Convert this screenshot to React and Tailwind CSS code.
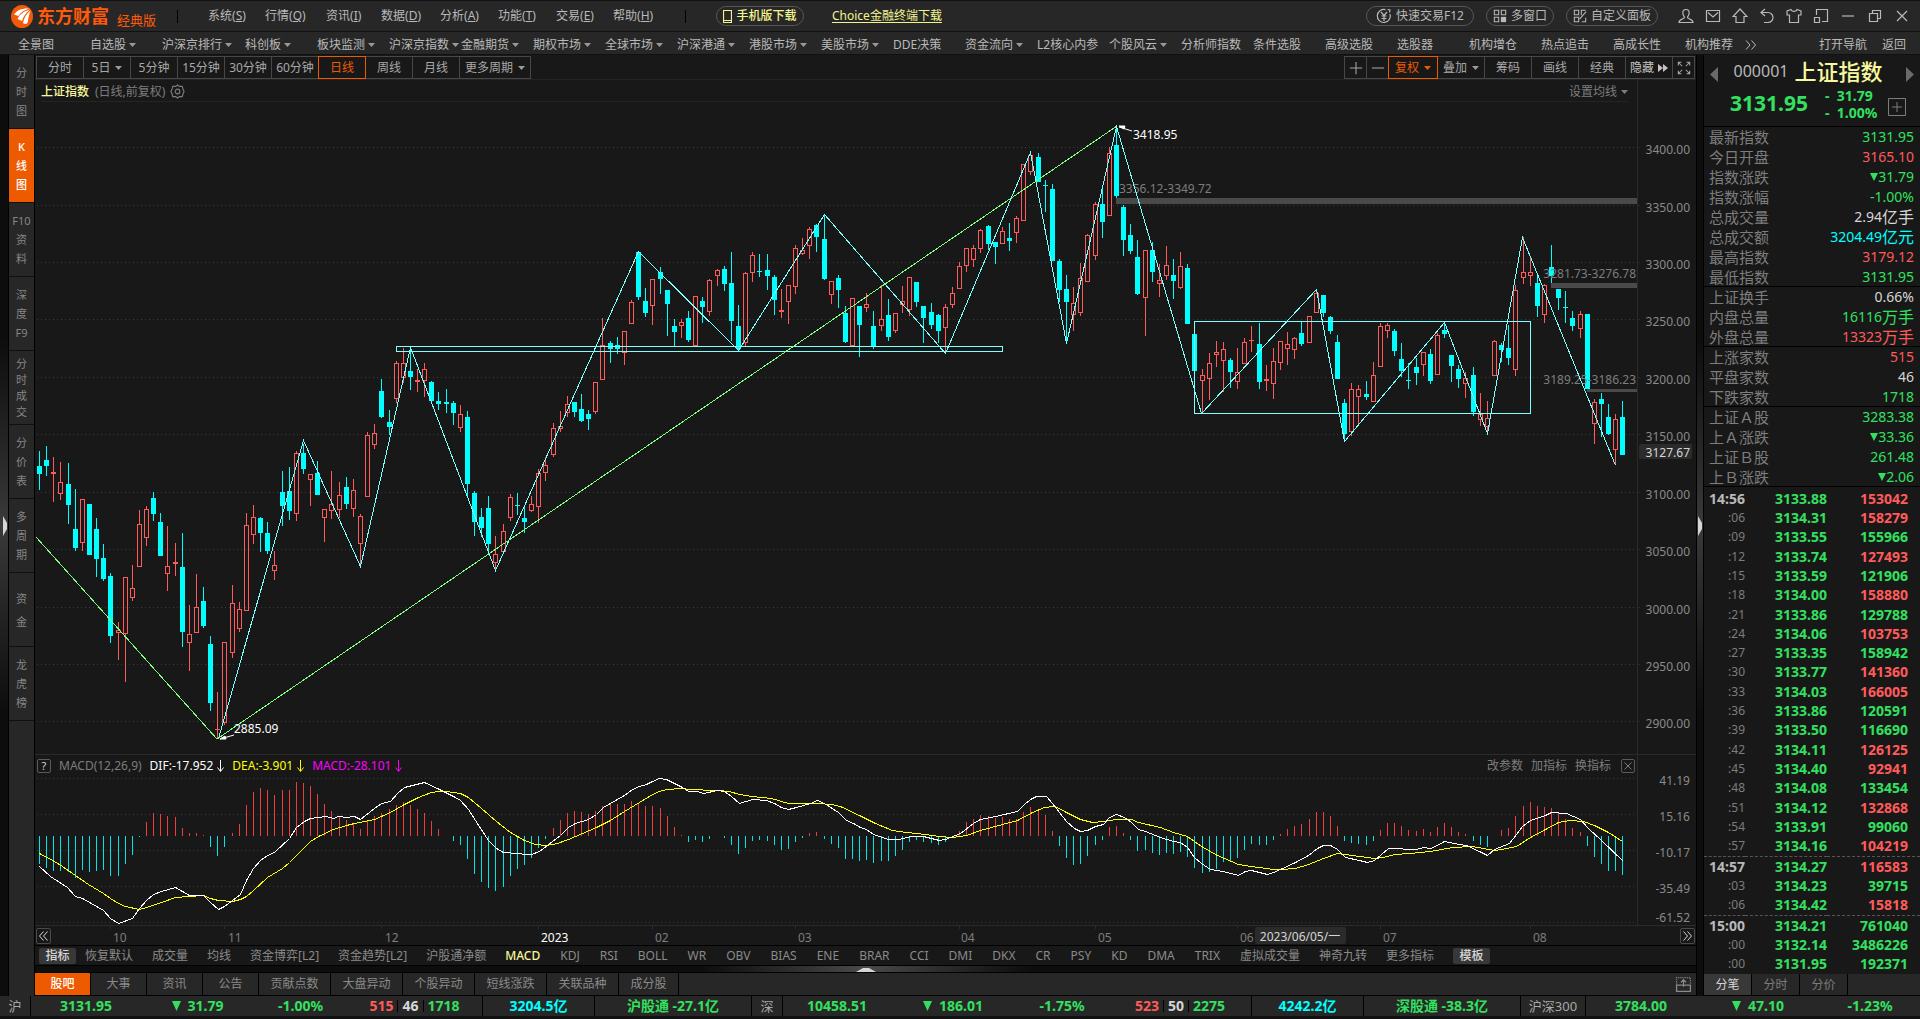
import { Fragment } from 'react'
import clsx from 'clsx'

const MENUS = [
  ['系统', 'S', 'w-[57px]'],
  ['行情', 'Q', 'w-[61px]'],
  ['资讯', 'I', 'w-[55px]'],
  ['数据', 'D', 'w-[59px]'],
  ['分析', 'A', 'w-[58px]'],
  ['功能', 'T', 'w-[58px]'],
  ['交易', 'E', 'w-[57px]'],
  ['帮助', 'H', 'w-[57px]'],
]

const NAV = [
  ['全景图'],
  ['自选股', true],
  ['沪深京排行', true],
  ['科创板', true],
  ['板块监测', true],
  ['沪深京指数', true],
  ['金融期货', true],
  ['期权市场', true],
  ['全球市场', true],
  ['沪深港通', true],
  ['港股市场', true],
  ['美股市场', true],
  ['DDE决策'],
  ['资金流向', true],
  ['L2核心内参'],
  ['个股风云', true],
  ['分析师指数'],
  ['条件选股'],
  ['高级选股'],
  ['选股器'],
  ['机构增仓'],
  ['热点追击'],
  ['高成长性'],
  ['机构推荐'],
]

const SIDE = [
  ['分', '时', '图'],
  ['K', '线', '图'],
  ['F10', '资', '料'],
  ['深', '度', 'F9'],
  ['分', '时', '成', '交'],
  ['分', '价', '表'],
  ['多', '周', '期'],
  ['资', '金'],
  ['龙', '虎', '榜'],
]

const PERIODS = ['分时', '5日', '5分钟', '15分钟', '30分钟', '60分钟', '日线', '周线', '月线', '更多周期']

const INDICATORS = [
  '恢复默认', '成交量', '均线', '资金博弈[L2]', '资金趋势[L2]', '沪股通净额', 'MACD', 'KDJ', 'RSI', 'BOLL', 'WR',
  'OBV', 'BIAS', 'ENE', 'BRAR', 'CCI', 'DMI', 'DKX', 'CR', 'PSY', 'KD', 'DMA', 'TRIX', '虚拟成交量', '神奇九转', '更多指标',
]

const NEWS_TABS = ['股吧', '大事', '资讯', '公告', '贡献点数', '大盘异动', '个股异动', '短线涨跌', '关联品种', '成分股']

// label, value, tone, unit, down arrow
const QUOTE_GROUPS = [
  [
    ['最新指数', '3131.95', 'green'],
    ['今日开盘', '3165.10', 'red'],
    ['指数涨跌', '31.79', 'green', '', true],
    ['指数涨幅', '-1.00%', 'green'],
    ['总成交量', '2.94', 'white', '亿手'],
    ['总成交额', '3204.49', 'cyan', '亿元'],
    ['最高指数', '3179.12', 'red'],
    ['最低指数', '3131.95', 'green'],
  ],
  [
    ['上证换手', '0.66%', 'white'],
    ['内盘总量', '16116', 'green', '万手'],
    ['外盘总量', '13323', 'red', '万手'],
  ],
  [
    ['上涨家数', '515', 'red'],
    ['平盘家数', '46', 'white'],
    ['下跌家数', '1718', 'green'],
  ],
  [
    ['上证Ａ股', '3283.38', 'green'],
    ['上Ａ涨跌', '33.36', 'green', '', true],
    ['上证Ｂ股', '261.48', 'green'],
    ['上Ｂ涨跌', '2.06', 'green', '', true],
  ],
]

const TICKS = [
  ['14:56', '3133.88', '153042', 'red'],
  [':06', '3134.31', '158279', 'red'],
  [':09', '3133.55', '155966', 'green'],
  [':12', '3133.74', '127493', 'red'],
  [':15', '3133.59', '121906', 'green'],
  [':18', '3134.00', '158880', 'red'],
  [':21', '3133.86', '129788', 'green'],
  [':24', '3134.06', '103753', 'red'],
  [':27', '3133.35', '158942', 'green'],
  [':30', '3133.77', '141360', 'red'],
  [':33', '3134.03', '166005', 'red'],
  [':36', '3133.86', '120591', 'green'],
  [':39', '3133.50', '116690', 'green'],
  [':42', '3134.11', '126125', 'red'],
  [':45', '3134.40', '92941', 'red'],
  [':48', '3134.08', '133454', 'green'],
  [':51', '3134.12', '132868', 'red'],
  [':54', '3133.91', '99060', 'green'],
  [':57', '3134.16', '104219', 'red'],
  ['14:57', '3134.27', '116583', 'red'],
  [':03', '3134.23', '39715', 'green'],
  [':06', '3134.42', '15818', 'red'],
  ['15:00', '3134.21', '761040', 'green'],
  [':00', '3132.14', '3486226', 'green'],
  [':00', '3131.95', '192371', 'green'],
]

const TONES = {
  green: 'text-[#33e060]',
  red: 'text-[#ff5b5b]',
  white: 'text-[#d6d6d6]',
  cyan: 'text-[#00ffff]',
}

// direction (1 up, 0 down), high, body top, body bottom, low
const CANDLES = [
  [0, 451, 466, 474, 490], [0, 446, 460, 466, 476], [1, 457, 472, 474, 502], [1, 462, 482, 494, 500],
  [0, 463, 484, 505, 524], [0, 489, 529, 548, 551], [1, 499, 499, 543, 551], [0, 504, 504, 555, 555],
  [0, 518, 529, 559, 577], [0, 544, 558, 579, 581], [0, 573, 576, 636, 643], [1, 622, 630, 633, 660],
  [1, 577, 577, 634, 682], [1, 565, 588, 598, 601], [1, 510, 524, 567, 567], [1, 506, 509, 538, 546],
  [0, 492, 498, 514, 521], [0, 513, 522, 556, 556], [1, 526, 566, 574, 591], [1, 543, 562, 564, 576],
  [0, 533, 567, 632, 647], [1, 605, 634, 643, 671], [1, 574, 607, 633, 633], [0, 587, 601, 626, 628],
  [0, 636, 644, 703, 711], [1, 692, 729, 730, 738], [1, 642, 642, 723, 725], [1, 585, 603, 653, 658],
  [1, 602, 609, 629, 632], [1, 513, 525, 611, 611], [1, 505, 517, 535, 544], [0, 517, 518, 533, 552],
  [0, 522, 533, 551, 554], [1, 551, 565, 571, 580], [0, 471, 492, 506, 526], [0, 467, 491, 511, 520],
  [1, 451, 453, 514, 521], [0, 444, 453, 469, 474], [1, 474, 474, 480, 506], [0, 461, 473, 495, 495],
  [1, 509, 509, 518, 542], [1, 471, 504, 511, 519], [1, 482, 495, 510, 518], [0, 477, 487, 504, 509],
  [1, 479, 490, 509, 517], [1, 514, 516, 544, 566], [1, 432, 435, 497, 497], [1, 424, 433, 445, 449],
  [0, 379, 391, 417, 418], [0, 410, 422, 427, 435], [1, 361, 363, 399, 403], [1, 348, 363, 378, 383],
  [0, 347, 371, 377, 390], [1, 369, 380, 382, 392], [1, 363, 369, 381, 397], [0, 381, 382, 401, 401],
  [0, 392, 401, 404, 410], [0, 389, 402, 404, 413], [0, 401, 403, 413, 425], [1, 405, 414, 428, 432],
  [0, 411, 417, 484, 496], [0, 491, 493, 522, 536], [0, 508, 517, 528, 537], [0, 496, 508, 544, 554],
  [1, 536, 554, 563, 570], [1, 524, 531, 552, 552], [1, 494, 497, 518, 521], [0, 493, 505, 506, 515],
  [0, 507, 518, 522, 533], [1, 496, 504, 511, 512], [1, 469, 473, 507, 523], [1, 457, 465, 473, 481],
  [1, 423, 428, 455, 457], [1, 411, 426, 429, 432], [1, 396, 404, 413, 417], [0, 402, 402, 412, 417],
  [0, 394, 409, 421, 422], [0, 410, 414, 419, 430], [1, 382, 382, 412, 414], [1, 318, 345, 380, 380],
  [0, 341, 343, 349, 363], [0, 337, 345, 349, 354], [1, 331, 331, 353, 365], [1, 300, 302, 324, 324],
  [0, 251, 252, 297, 300], [0, 288, 301, 313, 317], [1, 279, 279, 306, 325], [0, 267, 272, 279, 294],
  [0, 290, 290, 304, 336], [0, 319, 326, 332, 347], [1, 319, 322, 326, 338], [0, 311, 318, 340, 342],
  [1, 296, 296, 346, 346], [0, 297, 301, 307, 323], [1, 279, 280, 312, 316], [1, 269, 270, 276, 286],
  [0, 266, 269, 284, 291], [0, 252, 283, 321, 341], [0, 305, 326, 349, 350], [1, 272, 273, 343, 346],
  [1, 252, 255, 273, 282], [0, 254, 271, 272, 277], [0, 254, 270, 276, 290], [0, 275, 277, 300, 315],
  [1, 289, 310, 312, 318], [1, 285, 285, 302, 324], [1, 245, 248, 287, 294], [1, 238, 250, 254, 255],
  [1, 227, 229, 246, 259], [0, 224, 225, 237, 252], [0, 214, 239, 279, 280], [1, 281, 281, 295, 304],
  [0, 275, 278, 290, 308], [0, 306, 313, 342, 343], [1, 298, 298, 346, 346], [0, 306, 306, 325, 357],
  [1, 293, 304, 308, 312], [0, 311, 326, 347, 349], [1, 285, 319, 326, 331], [0, 299, 315, 337, 341],
  [1, 313, 313, 331, 333], [1, 286, 301, 305, 313], [1, 277, 277, 310, 316], [0, 282, 282, 302, 307],
  [0, 306, 306, 318, 343], [0, 303, 312, 325, 329], [0, 314, 315, 331, 343], [1, 304, 307, 328, 353],
  [1, 287, 293, 305, 308], [1, 262, 266, 289, 289], [1, 248, 248, 266, 272], [1, 245, 248, 260, 267],
  [1, 229, 230, 249, 253], [0, 225, 226, 244, 250], [0, 242, 242, 247, 264], [1, 227, 231, 244, 244],
  [0, 223, 238, 241, 251], [1, 216, 218, 233, 243], [1, 164, 164, 221, 221], [1, 152, 155, 172, 175],
  [0, 153, 157, 182, 182], [0, 180, 185, 186, 212], [0, 184, 189, 261, 261], [0, 259, 261, 290, 302],
  [0, 275, 289, 302, 343], [1, 287, 303, 315, 331], [1, 263, 278, 313, 316], [1, 234, 235, 282, 282],
  [1, 202, 204, 256, 260], [0, 189, 204, 222, 238], [1, 147, 153, 216, 216], [0, 126, 145, 196, 198],
  [0, 205, 207, 240, 256], [0, 224, 235, 251, 254], [0, 240, 257, 294, 295], [1, 250, 250, 298, 336],
  [0, 242, 250, 272, 282], [1, 264, 280, 284, 297], [1, 246, 265, 276, 280], [0, 259, 275, 281, 299],
  [1, 252, 266, 288, 289], [0, 264, 268, 324, 324], [0, 334, 334, 371, 371], [1, 369, 375, 381, 412],
  [1, 353, 363, 379, 400], [1, 341, 352, 355, 367], [1, 342, 349, 361, 392], [0, 358, 360, 372, 388],
  [1, 348, 372, 382, 389], [1, 338, 342, 364, 364], [1, 326, 340, 341, 352], [0, 323, 344, 382, 389],
  [1, 365, 379, 381, 391], [1, 348, 361, 384, 399], [1, 341, 341, 363, 370], [1, 332, 344, 349, 365],
  [1, 337, 338, 350, 359], [0, 322, 333, 344, 346], [1, 316, 316, 343, 343], [1, 289, 293, 313, 313],
  [0, 295, 295, 313, 317], [0, 316, 317, 331, 334], [0, 335, 342, 379, 379], [0, 399, 403, 434, 440],
  [1, 383, 389, 432, 436], [1, 385, 389, 397, 426], [0, 381, 394, 397, 400], [1, 362, 375, 402, 402],
  [1, 323, 326, 367, 367], [1, 323, 325, 331, 338], [0, 329, 331, 351, 356], [0, 343, 359, 371, 377],
  [0, 363, 380, 381, 389], [0, 358, 367, 373, 385], [1, 352, 352, 365, 376], [0, 349, 354, 381, 384],
  [1, 333, 335, 375, 375], [0, 322, 330, 334, 338], [0, 355, 355, 366, 382], [0, 365, 369, 379, 388],
  [1, 372, 378, 384, 398], [0, 367, 375, 412, 416], [1, 393, 414, 420, 426], [1, 401, 418, 427, 433],
  [1, 340, 341, 376, 376], [0, 343, 345, 350, 362], [0, 325, 348, 358, 365], [1, 285, 290, 370, 376],
  [1, 237, 272, 278, 284], [1, 258, 272, 276, 286], [0, 276, 283, 306, 317], [1, 284, 285, 315, 323],
  [0, 245, 267, 276, 283], [0, 289, 289, 298, 310], [0, 291, 307, 308, 323], [0, 311, 318, 326, 331],
  [1, 311, 314, 329, 338], [0, 314, 314, 389, 389], [1, 399, 402, 424, 444], [0, 393, 399, 404, 437],
  [0, 404, 417, 434, 435], [1, 414, 419, 450, 465], [0, 401, 417, 455, 455],
]

const MACD_BARS = [
  -28, -32, -35, -35, -36, -42, -34, -36, -35, -34, -40, -40, -28, -19, -1, 14, 23, 22, 20, 19, 8, 3, 3, 1,
  -11, -20, -11, 3, 12, 31, 44, 48, 46, 41, 46, 46, 54, 53, 50, 42, 32, 25, 20, 16, 12, 7, 15, 20, 23, 27,
  31, 34, 31, 27, 23, 15, 7, 0, -5, -9, -23, -38, -46, -52, -55, -51, -40, -33, -29, -22, -12, -3, 8, 16,
  23, 25, 24, 22, 25, 30, 33, 32, 32, 35, 32, 30, 30, 28, 20, 9, 1, -6, -4, -6, -3, 0, -2, -9, -18, -12,
  -5, -4, -5, -9, -14, -13, -6, -2, 3, 4, -3, -8, -12, -23, -23, -25, -24, -27, -25, -25, -20, -14, -6, -4,
  -6, -7, -9, -6, -1, 5, 14, 17, 21, 20, 18, 19, 17, 17, 24, 29, 26, 21, 5, -10, -22, -29, -28, -20, -9,
  -4, 9, 10, 3, -4, -15, -14, -17, -19, -17, -18, -16, -21, -32, -37, -36, -33, -26, -25, -22, -14, -8, -9,
  -9, -4, 2, 7, 10, 12, 17, 24, 24, 20, 10, -5, -7, -8, -9, -5, 6, 13, 13, 10, 6, 5, 7, 4, 9, 13, 9, 4, 2,
  -5, -9, -11, 0, 6, 8, 20, 30, 34, 30, 29, 28, 23, 17, 8, 4, -10, -21, -28, -35, -35, -39,
]

const DIF =
  '39,866 50,876 67,887 75,896 82,898 103,910 110,918 118,923 132,918 139,908 146,900 153,894 161,891 175,887 189,895 203,895 210,902 218,909 224,906 232,900 240,894 246,880 253,868 260,860 267,855 274,852 289,838 296,827 304,821 310,818 318,817 326,816 333,818 338,816 346,817 354,816 360,819 374,808 381,803 390,801 397,793 404,787 412,785 424,782 439,789 453,796 460,800 468,809 475,820 488,840 496,848 503,852 517,853 525,854 531,854 539,851 560,835 568,827 575,823 588,819 596,814 603,807 610,803 624,795 632,789 639,786 646,784 652,781 659,778 666,779 674,783 682,787 688,791 697,791 703,793 717,790 724,791 731,796 739,803 752,799 766,800 774,803 781,807 788,809 796,807 803,805 810,803 817,800 824,803 838,812 846,820 853,823 860,827 866,829 873,834 888,839 899,839 910,836 923,836 939,840 945,839 960,833 973,823 980,819 995,816 1017,811 1024,804 1030,799 1036,796 1046,796 1052,803 1059,812 1066,821 1074,828 1080,831 1087,830 1095,826 1103,824 1109,817 1116,814 1124,817 1131,822 1138,829 1145,831 1160,837 1173,841 1180,842 1187,847 1194,857 1201,863 1210,869 1223,871 1238,875 1245,871 1251,870 1267,874 1273,872 1280,869 1295,862 1308,855 1317,848 1323,845 1330,845 1337,849 1345,857 1359,860 1367,862 1374,860 1381,854 1388,848 1416,849 1423,847 1430,848 1437,845 1444,841 1459,844 1466,845 1481,852 1487,855 1494,849 1509,843 1516,834 1522,826 1530,820 1545,815 1551,812 1566,813 1580,819 1588,828 1601,840 1623,861'

const DEA =
  '39,853 54,861 62,866 75,875 88,884 103,893 110,898 118,903 125,906 139,909 146,907 161,902 175,897 189,896 203,895 210,898 218,900 232,901 240,899 246,896 253,890 267,877 282,868 289,862 304,847 310,841 318,836 333,829 346,825 354,823 374,819 390,812 404,804 418,797 431,792 439,791 446,791 453,792 460,793 468,797 481,808 496,821 510,832 524,840 535,844 546,845 557,843 568,839 575,836 596,827 610,820 624,811 639,802 652,794 659,791 666,789 682,788 688,789 717,790 729,791 739,794 752,796 771,798 788,803 797,803 817,803 831,804 840,806 861,816 875,823 892,830 906,832 917,833 939,836 952,837 966,835 980,830 1002,824 1017,820 1032,812 1044,807 1054,806 1059,808 1066,812 1080,819 1092,822 1103,821 1116,819 1131,819 1138,822 1160,827 1173,832 1187,836 1201,846 1217,855 1238,864 1251,866 1273,869 1280,869 1295,868 1308,864 1323,858 1337,853 1352,855 1374,858 1383,857 1394,854 1409,853 1430,851 1452,847 1472,846 1494,850 1501,849 1516,846 1530,837 1545,829 1558,822 1569,820 1583,821 1594,825 1608,832 1622,841'

const ZIGZAG =
  '218,738 303,440 360,566 410,347 495,570 638,251 738,350 824,214 945,353 1030,152 1066,343 1116,126 1201,413 1316,289 1344,441 1444,322 1487,433 1522,237 1615,465'

const PRICE_GRID = [
  [147, '3400.00'], [205, '3350.00'], [262, '3300.00'], [319, '3250.00'], [377, '3200.00'], [434, '3150.00'],
  [492, '3100.00'], [549, '3050.00'], [607, '3000.00'], [664, '2950.00'], [721, '2900.00'],
]

const MACD_GRID = [
  [778, 785, '41.19'], [814, 821, '15.16'], [850, 857, '-10.17'], [886, 893, '-35.49'], [922, 922, '-61.52'],
]

const MONTHS = [
  [110, 113, '10'], [224, 228, '11'], [381, 385, '12'], [538, 541, '2023'], [652, 655, '02'], [795, 798, '03'],
  [959, 961, '04'], [1095, 1098, '05'], [1237, 1240, '06'], [1380, 1383, '07'], [1530, 1533, '08'],
]

const candleX = (i) => Math.round(39.05 + i * 7.132)

function Caret({ className = 'text-[#9a9a9a]' }) {
  return (
    <svg width="7" height="4" viewBox="0 0 7 4" className={clsx('shrink-0', className)} fill="currentColor">
      <path d="M0 0h7L3.5 4z" />
    </svg>
  )
}

function Glyph({ size = 16, children, className }) {
  return (
    <svg
      width={size}
      height={size}
      viewBox="0 0 16 16"
      className={clsx('shrink-0', className)}
      fill="none"
      stroke="currentColor"
      strokeWidth="1.2"
    >
      {children}
    </svg>
  )
}

function DownMark() {
  return (
    <svg width="9" height="10" viewBox="0 0 9 10" className="shrink-0" fill="currentColor">
      <path d="M0 0h9L4.5 10z" />
    </svg>
  )
}

function TitleBar() {
  return (
    <header className="flex h-8 items-center overflow-hidden border-t border-b border-[#111] bg-[#272727] text-xs whitespace-nowrap text-[#b9b9b9]">
      <svg width="22" height="23" viewBox="0 0 22 23" className="ml-[11px] shrink-0">
        <ellipse cx="11" cy="11.500" rx="11" ry="11.500" fill="#f25a07" />
        <path d="M3 9.500C6 5 11 3 18.500 3.500c-5 1.500-8.500 3.500-11 7.500z" fill="#fff" />
        <path d="M6.500 14C9 9 13 6 19 4.500c-4.500 3.500-6.500 7-8 11.500z" fill="#fff" />
        <path d="M12 18c1-5 3-9 7.500-12.500-1.500 4-2 7.500-3 12.500-1.500 1.500-3.500 1-4.500 0z" fill="#fff" />
      </svg>
      <span className="ml-1 text-lg leading-6 font-bold text-[#ff5a0a]">东方财富</span>
      <span className="mt-2 ml-2 w-[60px] shrink-0 text-[13px] leading-4 text-[#ff5a0a]">经典版</span>
      <span className="h-[13px] w-px bg-black" />
      <nav className="ml-[30px] flex">
        {MENUS.map(([label, key, width]) => (
          <button key={key} type="button" className={clsx('shrink-0 text-left', width)}>
            {label}(<u>{key}</u>)
          </button>
        ))}
      </nav>
      <span className="ml-[15px] h-[13px] w-px bg-black" />
      <button
        type="button"
        className="ml-[30px] flex h-5 w-[88px] shrink-0 items-center justify-center gap-1 rounded-full border border-[#555] font-medium text-[#f3f58e]"
      >
        <svg width="9" height="13" viewBox="0 0 9 13" fill="none" stroke="currentColor" className="shrink-0">
          <path d="M.5.5h8v12h-8zM1 10.500h7" strokeWidth="1.200" />
        </svg>
        手机版下载
      </button>
      <a href="#choice" className="ml-7 text-[#f3f58e] underline underline-offset-2">
        Choice金融终端下载
      </a>

      <div className="ml-auto flex shrink-0 items-center gap-3">
        <button type="button" className="flex h-5 w-[108px] items-center justify-center gap-1 rounded-full border border-[#555]">
          <Glyph>
            <path d="M9.500 1.700A6.500 6.500 0 1 0 14 6M5 4l3 3.500L11 4M8 7.500V13M5.500 8h5M5.500 10.500h5M11.500 1.500l2.500.5-.5 2.500" />
          </Glyph>
          快速交易F12
        </button>
        <button type="button" className="flex h-5 w-[68px] items-center justify-center gap-1 rounded-full border border-[#555]">
          <Glyph size={14}>
            <path d="M1.500 1.500h5v5h-5zM9.500 1.500h5v5h-5zM1.500 9.500h5v5h-5z" />
            <path d="M9 9h6v6H9z" fill="currentColor" stroke="none" />
          </Glyph>
          多窗口
        </button>
        <button type="button" className="flex h-5 w-[92px] items-center justify-center gap-1 rounded-full border border-[#555]">
          <Glyph size={14}>
            <path d="M1.500 1.500h5v5h-5zM9.500 7V1.500h5M1.500 9.500h5v5h-5zM14.500 10v4.500H10M7.500 11.500 15 3" />
          </Glyph>
          自定义面板
        </button>
      </div>
      <div className="mr-2.5 ml-5 flex shrink-0 items-center gap-[11px]">
        <button type="button" aria-label="用户">
          <Glyph>
            <path d="M8 1.500c2.200 0 3.200 1.500 3.200 3.300S10 8.500 9.500 9.200c0 2 5.500 1.800 5.500 5.300H1c0-3.500 5.500-3.300 5.500-5.300C6 8.500 4.800 6.600 4.800 4.800S5.800 1.500 8 1.500z" />
          </Glyph>
        </button>
        <button type="button" aria-label="邮件">
          <Glyph>
            <path d="M1.500 2.500h13v11h-13zM3 4.500l5 4.500 5-4.500" />
          </Glyph>
        </button>
        <button type="button" aria-label="主页">
          <Glyph>
            <path d="M8 1 1 8.500h3v6h8v-6h3z" />
          </Glyph>
        </button>
        <button type="button" aria-label="返回">
          <Glyph>
            <path d="M6 1 2 4.500 6 8M2 4.500h7a5 5 0 0 1 0 10H5" />
          </Glyph>
        </button>
        <button type="button" aria-label="换肤">
          <Glyph>
            <path d="M5 1.500 1 3v4h2.500v7.500h9V7H15V3l-4-1.500C10.500 4 5.500 4 5 1.500z" />
          </Glyph>
        </button>
        <button type="button" aria-label="停靠">
          <Glyph>
            <path d="M3.500 7V1.500h11v12H9M1.500 9.500h5v5h-5z" />
          </Glyph>
        </button>
        <button type="button" aria-label="最小化">
          <Glyph>
            <path d="M2 8h12" />
          </Glyph>
        </button>
        <button type="button" aria-label="还原">
          <Glyph>
            <path d="M2.500 5.500h8v8h-8zM5.500 5V2.500h8v8H11" />
          </Glyph>
        </button>
        <button type="button" aria-label="关闭">
          <Glyph>
            <path d="m3 3 10 10M13 3 3 13" />
          </Glyph>
        </button>
      </div>
    </header>
  )
}

function NavBar() {
  return (
    <nav className="flex h-[23px] items-center overflow-hidden border-b border-[#111] bg-[#272727] pt-[3px] pr-[14px] pl-[18px] text-xs whitespace-nowrap text-[#b9b9b9]">
      {NAV.map(([label, caret]) => (
        <button
          key={label}
          type="button"
          className={clsx('flex shrink-0 items-center gap-[3px]', label === '沪深京排行' ? 'w-[83px]' : 'w-[72px]')}
        >
          {label}
          {caret && <Caret />}
        </button>
      ))}
      <button type="button" aria-label="更多" className="-ml-3">
        <svg width="12" height="10" viewBox="0 0 12 10" fill="none" stroke="currentColor">
          <path d="m1 .5 4 4.500-4 4.500M6.500.5l4 4.500-4 4.500" />
        </svg>
      </button>
      <button type="button" className="ml-auto">打开导航</button>
      <button type="button" className="ml-[15px]">返回</button>
    </nav>
  )
}

function SideTabs() {
  return (
    <aside className="flex w-[26px] shrink-0 flex-col border-r border-black bg-[#272727]">
      {SIDE.map((chars, i) => (
        <button
          key={chars.join('')}
          type="button"
          className={clsx(
            'flex h-[74px] w-full flex-col items-center justify-center border-b border-[#101010] text-[11px]',
            i === 1 ? 'bg-[#ee5a00] font-medium text-white' : 'text-[#868686]',
            chars.length === 4 && 'leading-4',
            chars.length === 3 && 'leading-[19px]',
            chars.length === 2 && 'leading-[23px]',
          )}
        >
          {chars.map((c) => (
            <span key={c}>{c}</span>
          ))}
        </button>
      ))}
    </aside>
  )
}

function PeriodBar() {
  return (
    <div className="flex h-[25px] items-start border-b border-[#242424] pt-px pl-px text-xs whitespace-nowrap text-[#a8a8a8]">
      {PERIODS.map((p) => (
        <button
          key={p}
          type="button"
          className={clsx(
            'relative -mr-px flex h-[23px] shrink-0 items-center justify-center gap-[5px] border',
            p === '更多周期' ? 'w-[72px]' : 'w-12',
            p === '日线' ? 'z-10 border-[#ee5a00] text-[#ee5a00]' : 'border-[#474747]',
          )}
        >
          {p}
          {(p === '5日' || p === '更多周期') && <Caret />}
        </button>
      ))}
      <div className="mr-px ml-auto flex">
        <button type="button" aria-label="放大" className="-mr-px flex h-[23px] w-[23px] items-center justify-center border border-[#474747]">
          <Glyph size={14}>
            <path d="M8 1v14M1 8h14" />
          </Glyph>
        </button>
        <button type="button" aria-label="缩小" className="-mr-px flex h-[23px] w-[23px] items-center justify-center border border-[#474747]">
          <Glyph size={14}>
            <path d="M1 8h14" />
          </Glyph>
        </button>
        <button
          type="button"
          className="relative z-10 -mr-px flex h-[23px] w-[50px] items-center justify-center gap-[5px] border border-[#ee5a00] text-[#ee5a00]"
        >
          复权
          <Caret className="text-[#ee5a00]" />
        </button>
        <button type="button" className="-mr-px flex h-[23px] w-12 items-center justify-center gap-[5px] border border-[#474747]">
          叠加
          <Caret />
        </button>
        {['筹码', '画线', '经典'].map((t) => (
          <button key={t} type="button" className="-mr-px h-[23px] w-12 border border-[#474747]">
            {t}
          </button>
        ))}
        <button type="button" className="-mr-px flex h-[23px] w-12 items-center justify-center gap-1 border border-[#474747] text-[#c4c4c4]">
          隐藏
          <svg width="10" height="8" viewBox="0 0 10 8" fill="currentColor">
            <path d="m0 0 5 4-5 4zM5 0l5 4-5 4z" />
          </svg>
        </button>
        <button type="button" aria-label="全屏" className="flex h-[23px] w-[23px] items-center justify-center border border-[#474747]">
          <Glyph size={14}>
            <path d="M1.500 5V1.500H5M11 1.500h3.500V5M14.500 11v3.500H11M5 14.500H1.500V11M2 2l4 4M14 2l-4 4M14 14l-4-4M2 14l4-4" />
          </Glyph>
        </button>
      </div>
    </div>
  )
}

function ChartTitle() {
  return (
    <div className="flex h-[22px]">
      <div className="mr-[9px] ml-1.5 flex flex-1 items-center border-b border-[#242424] pt-0.5 text-xs text-[#7d7d7d]">
        <span className="font-medium text-[#f6f79a]">上证指数</span>
        <span className="ml-1.5">(日线,前复权)</span>
        <Glyph size={15} className="ml-[5px]">
          <path d="M8 1l2 1.500h3l.8 2.800L15 8l-1.200 2.700L13 13.500h-3L8 15l-2-1.500H3l-.8-2.800L1 8l1.200-2.700L3 2.500h3z" />
          <circle cx="8" cy="8" r="2.500" />
        </Glyph>
        <button type="button" className="ml-auto flex items-center gap-1">
          设置均线
          <Caret className="text-[#7d7d7d]" />
        </button>
      </div>
      <div className="w-[59px] border-l border-[#2b2b2b]" />
    </div>
  )
}

function Candle({ i, data }) {
  const [up, high, top, bottom, low] = data
  const x = candleX(i)
  const h = bottom - top
  return (
    <g fill={up ? '#ff5b5b' : '#00ffff'}>
      {top > high && <rect x={x} y={high} width="1" height={top - high} />}
      {low > bottom && <rect x={x} y={bottom} width="1" height={low - bottom} />}
      {up && h > 2 ? (
        <rect x={x - 1.5} y={top + 0.5} width="4" height={h - 1} fill="none" stroke="#ff5b5b" />
      ) : (
        <rect x={x - 2} y={top} width="5" height={h} />
      )}
    </g>
  )
}

function PriceChart() {
  return (
    <svg viewBox="35 102 1661 652" className="block h-auto w-full" fontSize="12" shapeRendering="crispEdges">
      {PRICE_GRID.map(([y, label]) => (
        <Fragment key={label}>
          <path d={`M37 ${y + 0.5}H1637`} stroke="#3a3a3a" strokeDasharray="1 3" />
          <path d={`M1637 ${y + 0.5}h3`} stroke="#2b2b2b" />
          <text x="1690" y={y + 7} textAnchor="end" fill="#8a8a8a">
            {label}
          </text>
        </Fragment>
      ))}
      <path d="M1637.500 102V754" stroke="#2b2b2b" />

      {CANDLES.map((c, i) => (
        <Candle key={i} i={i} data={c} />
      ))}

      {/* gap zones */}
      <g fill="#4a4a4a">
        <rect x="1116" y="198" width="521" height="6" />
        <rect x="1551" y="283" width="86" height="5" />
        <rect x="1587" y="389" width="50" height="3" />
      </g>
      <g fill="#7d7d7d">
        <text x="1119" y="193">3356.12-3349.72</text>
        <text x="1636" y="278" textAnchor="end">3281.73-3276.78</text>
        <text x="1636" y="384" textAnchor="end">3189.25-3186.23</text>
      </g>

      <g fill="none" stroke="#80ffff" transform="translate(.5 .5)">
        <path d="M396 346H1002V351H396zM1194 321H1530V413H1194z" />
        <polyline points={ZIGZAG} />
      </g>
      <polyline points="36,537 217,739 1117,126" fill="none" stroke="#80ff80" />

      <g stroke="#fff" fill="#fff" shapeRendering="auto">
        <path d="M220 739l14-4M220 739l5-3 1 3z" />
        <path d="M1119 127l13 4M1119 126l6 0-1 3z" />
      </g>
      <text x="234" y="733" fill="#fff">2885.09</text>
      <text x="1133" y="139" fill="#fff">3418.95</text>

      <rect x="1639" y="444" width="53" height="15" rx="2" fill="#2b2b2b" />
      <text x="1690" y="457" textAnchor="end" fill="#d6d6d6">3127.67</text>
    </svg>
  )
}

function DownArrow() {
  return (
    <svg width="7" height="12" viewBox="0 0 7 12" className="shrink-0" fill="none" stroke="currentColor">
      <path d="M3.500 0v11M.5 7.500l3 4 3-4" />
    </svg>
  )
}

function MacdHeader() {
  return (
    <div className="flex h-[22px] border-t border-[#2b2b2b] text-xs whitespace-nowrap">
      <div className="mr-[2px] flex flex-1 items-center gap-2 pt-px pl-0.5 text-[#7d7d7d]">
        <button type="button" className="flex h-[14px] w-[14px] items-center justify-center rounded-[2px] border border-[#5a5a5a] text-[11px] text-[#d6d6d6]">
          ?
        </button>
        <span>MACD(12,26,9)</span>
        <span className="flex items-center gap-1 text-white">
          DIF:-17.952
          <DownArrow />
        </span>
        <span className="flex items-center gap-1 text-[#ffff00]">
          DEA:-3.901
          <DownArrow />
        </span>
        <span className="flex items-center gap-1 text-[#ff00ff]">
          MACD:-28.101
          <DownArrow />
        </span>
        <button type="button" className="ml-auto">改参数</button>
        <button type="button">加指标</button>
        <button type="button">换指标</button>
        <button type="button" aria-label="关闭" className="ml-0.5 flex h-[14px] w-[14px] items-center justify-center rounded-[2px] border border-[#5a5a5a]">
          <Glyph size={8}>
            <path d="m1 1 14 14M15 1 1 15" strokeWidth="2" />
          </Glyph>
        </button>
      </div>
      <div className="w-[59px] border-l border-[#2b2b2b]" />
    </div>
  )
}

function MacdChart() {
  return (
    <svg viewBox="35 776 1661 149" className="block h-auto w-full overflow-visible" fontSize="12" shapeRendering="crispEdges">
      {MACD_GRID.map(([y, base, label]) => (
        <Fragment key={label}>
          <path d={`M37 ${y + 0.5}H1637`} stroke="#3a3a3a" strokeDasharray="1 3" />
          <text x="1690" y={base} textAnchor="end" fill="#8a8a8a">
            {label}
          </text>
        </Fragment>
      ))}
      <path d="M1637.500 776V925" stroke="#2b2b2b" />
      {MACD_BARS.map((v, i) => (
        <rect
          key={i}
          x={candleX(i)}
          y={v > 0 ? 836 - v : 836}
          width="1"
          height={Math.abs(v)}
          fill={v > 0 ? '#f03c3c' : '#00e5e5'}
        />
      ))}
      <g fill="none" transform="translate(.5 .5)">
        <polyline points={DEA} stroke="#ffff00" />
        <polyline points={DIF} stroke="#fff" />
      </g>
    </svg>
  )
}

function DateAxis() {
  return (
    <div className="flex h-5 items-center border-t border-[#2b2b2b] px-px">
      <button type="button" aria-label="向左" className="flex h-4 w-[15px] shrink-0 items-center justify-center rounded-[2px] border border-[#4a4a4a] text-[#d6d6d6]">
        <svg width="9" height="10" viewBox="0 0 9 10" fill="none" stroke="currentColor">
          <path d="M4.500.5.5 5l4 4.500M8.500.5 4.500 5l4 4.500" />
        </svg>
      </button>
      <svg viewBox="51 926 1629 19" className="block h-auto min-w-0 flex-1" fontSize="12">
        {MONTHS.map(([tick, x, label]) => (
          <Fragment key={label}>
            <path d={`M${tick + 0.5} 926v3`} stroke="#2b2b2b" />
            <text x={x} y="942" fill={label === '2023' ? '#fff' : '#7d7d7d'}>
              {label}
            </text>
          </Fragment>
        ))}
        <rect x="1255" y="927" width="91" height="17" rx="2" fill="#2b2b2b" />
        <text x="1300" y="941" textAnchor="middle" fill="#d6d6d6">2023/06/05/一</text>
      </svg>
      <button type="button" aria-label="向右" className="flex h-4 w-[15px] shrink-0 items-center justify-center rounded-[2px] border border-[#4a4a4a] text-[#d6d6d6]">
        <svg width="9" height="10" viewBox="0 0 9 10" fill="none" stroke="currentColor">
          <path d="m.5.5 4 4.500-4 4.500M4.500.5l4 4.500-4 4.500" />
        </svg>
      </button>
    </div>
  )
}

function IndicatorBar() {
  return (
    <div className="flex h-[21px] items-center overflow-hidden border-t border-b border-black pl-1 text-xs whitespace-nowrap text-[#8a8a8a]">
      <button type="button" className="mr-[9px] h-4 w-[37px] shrink-0 rounded-[2px] bg-[#383838] leading-4 font-medium text-[#d6d6d6]">
        指标
      </button>
      <div className="flex gap-[19px]">
        {INDICATORS.map((name) => (
          <button
            key={name}
            type="button"
            className={clsx('shrink-0', /^[A-Z]+$/.test(name) && 'pr-px', name === 'MACD' && 'font-medium text-[#f6f79a]')}
          >
            {name}
          </button>
        ))}
      </div>
      <button type="button" className="ml-[19px] h-4 w-[37px] shrink-0 rounded-[2px] bg-[#383838] leading-4 font-medium text-[#d6d6d6]">
        模板
      </button>
    </div>
  )
}

function NewsTabs() {
  return (
    <div className="flex h-6 items-center border-t border-b border-black bg-[#272727] text-xs text-[#8a8a8a]">
      {NEWS_TABS.map((t, i) => (
        <button
          key={t}
          type="button"
          className={clsx(
            'h-full shrink-0 border-r border-black',
            i === 0 && 'bg-[#ee5a00] font-medium text-white',
            t.length === 2 && 'w-14',
            t.length === 3 && 'w-[60px]',
            t.length === 4 && 'w-[72px]',
          )}
        >
          {t}
        </button>
      ))}
      <button type="button" aria-label="展开" className="mr-1 ml-auto">
        <Glyph size={17}>
          <path d="M1.500 8.500h13v6h-13zM8 10V4M5.500 6 8 3.500 10.500 6" />
          <path d="M1.500 8V1.500h13V8" strokeDasharray="1 1" />
        </Glyph>
      </button>
    </div>
  )
}

function QuotePanel() {
  return (
    <aside className="flex w-[216px] shrink-0 flex-col bg-[#181818]">
      <div className="h-[72px] border-b border-black px-1.5 pt-0.5">
        <div className="flex h-[30px] items-start justify-between">
          <button type="button" aria-label="上一只" className="mt-2.5 text-[#6a6a6a]">
            <svg width="8" height="15" viewBox="0 0 8 15" fill="currentColor">
              <path d="M8 0v15L0 7.500z" />
            </svg>
          </button>
          <h1 className="mr-2 flex items-center gap-1.5 whitespace-nowrap">
            <span className="text-base text-[#b9b9b9]">000001</span>
            <span className="text-[22px] leading-7 font-medium text-[#f8f99c]">上证指数</span>
          </h1>
          <button type="button" aria-label="下一只" className="mt-2.5 text-[#6a6a6a]">
            <svg width="8" height="15" viewBox="0 0 8 15" fill="currentColor">
              <path d="M0 0v15l8-7.500z" />
            </svg>
          </button>
        </div>
        <div className="flex items-center pl-5 text-[#33e060]">
          <span className="w-[95px] pb-0.5 text-[21px] leading-8 font-bold">3131.95</span>
          <span className="flex flex-col text-sm leading-[17px] font-bold whitespace-pre">
            <span>-  31.79</span>
            <span>-  1.00%</span>
          </span>
          <button type="button" aria-label="加自选" className="mt-1.5 mr-2 ml-auto text-[#7d7d7d]">
            <svg width="18" height="18" viewBox="0 0 18 18" fill="none" stroke="currentColor">
              <path d="M.5.5h17v17H.5zM9 4v10M4 9h10" />
            </svg>
          </button>
        </div>
      </div>

      {QUOTE_GROUPS.map((rows) => (
        <dl key={rows[0][0]} className="border-b border-black">
          {rows.map(([label, value, tone, unit, down]) => (
            <div key={label} className="flex h-5 items-center justify-between pr-1.5 pl-[5px] last:h-[19px]">
              <dt className="text-[15px] leading-5 text-[#7d7d7d]">{label}</dt>
              <dd className={clsx('flex items-center text-sm leading-5', TONES[tone])}>
                {down && (
                  <svg width="8" height="8" viewBox="0 0 8 8" fill="currentColor">
                    <path d="M0 0h8L4 8z" />
                  </svg>
                )}
                {value}
                {unit && <span className="text-base leading-5">{unit}</span>}
              </dd>
            </div>
          ))}
        </dl>
      ))}

      <div className="flex-1 pt-0.5">
        <table className="h-full w-full border-collapse text-right text-sm leading-[18px] font-bold">
          <tbody>
            {TICKS.map(([time, price, volume, tone], i) => {
              const full = time.length === 5
              return (
                <tr key={i} className={clsx(full && i > 0 && 'border-t border-dashed border-[#555]')}>
                  <td className={clsx('w-[41px] p-0', full ? 'text-[#b9b9b9]' : 'text-xs font-normal text-[#7d7d7d]')}>{time}</td>
                  <td className={clsx('w-[82px] p-0', TONES.green)}>{price}</td>
                  <td className={clsx('py-0 pr-3 pl-0', TONES[tone])}>{volume}</td>
                </tr>
              )
            })}
          </tbody>
        </table>
      </div>

      <div className="flex h-[22px] border-b border-black bg-[#272727] text-xs text-[#7d7d7d]">
        {['分笔', '分时', '分价'].map((t, i) => (
          <button key={t} type="button" className={clsx('w-12 border-r border-black', i === 0 && 'bg-[#383838] text-[#d6d6d6]')}>
            {t}
          </button>
        ))}
      </div>
    </aside>
  )
}

function Change({ children, className }) {
  return (
    <span className={clsx('flex shrink-0 items-center justify-center gap-[7px]', className)}>
      <DownMark />
      {children}
    </span>
  )
}

function Counts({ up, flat, down, className }) {
  return (
    <span className={clsx('flex shrink-0 items-center justify-center gap-1 self-stretch', className)}>
      <span className={TONES.red}>{up}</span>
      <span className="h-3 w-px bg-black" />
      <span className={TONES.white}>{flat}</span>
      <span className="h-3 w-px bg-black" />
      <span>{down}</span>
    </span>
  )
}

function StatusBar() {
  return (
    <footer className="flex h-[23px] items-center overflow-hidden border-b-[3px] border-[#111] bg-[#272727] text-center text-sm leading-5 font-bold whitespace-nowrap text-[#33e060]">
      <span className="w-[31px] shrink-0 border-r border-black text-[13px] font-normal text-[#a8a8a8]">沪</span>
      <span className="w-[110px] shrink-0">3131.95</span>
      <Change className="w-[113px]">31.79</Change>
      <span className="w-[93px] shrink-0">-1.00%</span>
      <Counts up="515" flat="46" down="1718" className="w-[136px] border-r border-black" />
      <span className="w-28 shrink-0 border-r border-black text-[#00ffff]">3204.5亿</span>
      <span className="w-[157px] shrink-0 border-r border-black">沪股通 -27.1亿</span>
      <span className="w-[31px] shrink-0 border-r border-black text-[13px] font-normal text-[#a8a8a8]">深</span>
      <span className="w-[108px] shrink-0">10458.51</span>
      <Change className="w-[124px]">186.01</Change>
      <span className="w-[94px] shrink-0">-1.75%</span>
      <Counts up="523" flat="50" down="2275" className="w-[143px] border-r border-black" />
      <span className="w-28 shrink-0 border-r border-black text-[#00ffff]">4242.2亿</span>
      <span className="w-[157px] shrink-0 border-r border-black">深股通 -38.3亿</span>
      <span className="w-[65px] shrink-0 border-r border-black text-[13px] font-normal text-[#a8a8a8]">沪深300</span>
      <span className="w-[110px] shrink-0">3784.00</span>
      <Change className="w-[124px]">47.10</Change>
      <span className="w-[100px] shrink-0">-1.23%</span>
    </footer>
  )
}

export default function App() {
  return (
    <div className="flex min-h-screen flex-col bg-[#111] font-['Noto_Sans','Noto_Sans_CJK_SC',sans-serif]">
      <TitleBar />
      <NavBar />
      <div className="flex flex-1">
        <div className="flex w-[9px] shrink-0 items-center border-r border-black bg-linear-to-b from-[#0d0d0d] from-30% via-[#3a3a3a] to-[#0d0d0d] to-70%">
          <svg width="4" height="20" viewBox="0 0 4 20" className="ml-[3px]" fill="#d6d6d6">
            <path d="M0 0v20l4-7V7z" />
          </svg>
        </div>
        <SideTabs />
        <main className="flex min-w-0 flex-1 flex-col bg-[#181818]">
          <PeriodBar />
          <ChartTitle />
          <PriceChart />
          <MacdHeader />
          <MacdChart />
          <DateAxis />
          <IndicatorBar />
          <div className="flex h-1.5 items-end justify-center bg-linear-to-r from-[#0d0d0d] from-40% via-[#4a4a4a] to-[#0d0d0d] to-60%">
            <svg width="20" height="4" viewBox="0 0 20 4" fill="#d6d6d6">
              <path d="M0 4h20l-7-4H7z" />
            </svg>
          </div>
          <NewsTabs />
        </main>
        <div className="flex w-2 shrink-0 items-center border-r border-l border-black bg-linear-to-b from-[#0d0d0d] from-30% via-[#3a3a3a] to-[#0d0d0d] to-70%">
          <svg width="4" height="20" viewBox="0 0 4 20" className="ml-px" fill="#d6d6d6">
            <path d="M0 0v20l4-7V7z" />
          </svg>
        </div>
        <QuotePanel />
      </div>
      <StatusBar />
    </div>
  )
}
